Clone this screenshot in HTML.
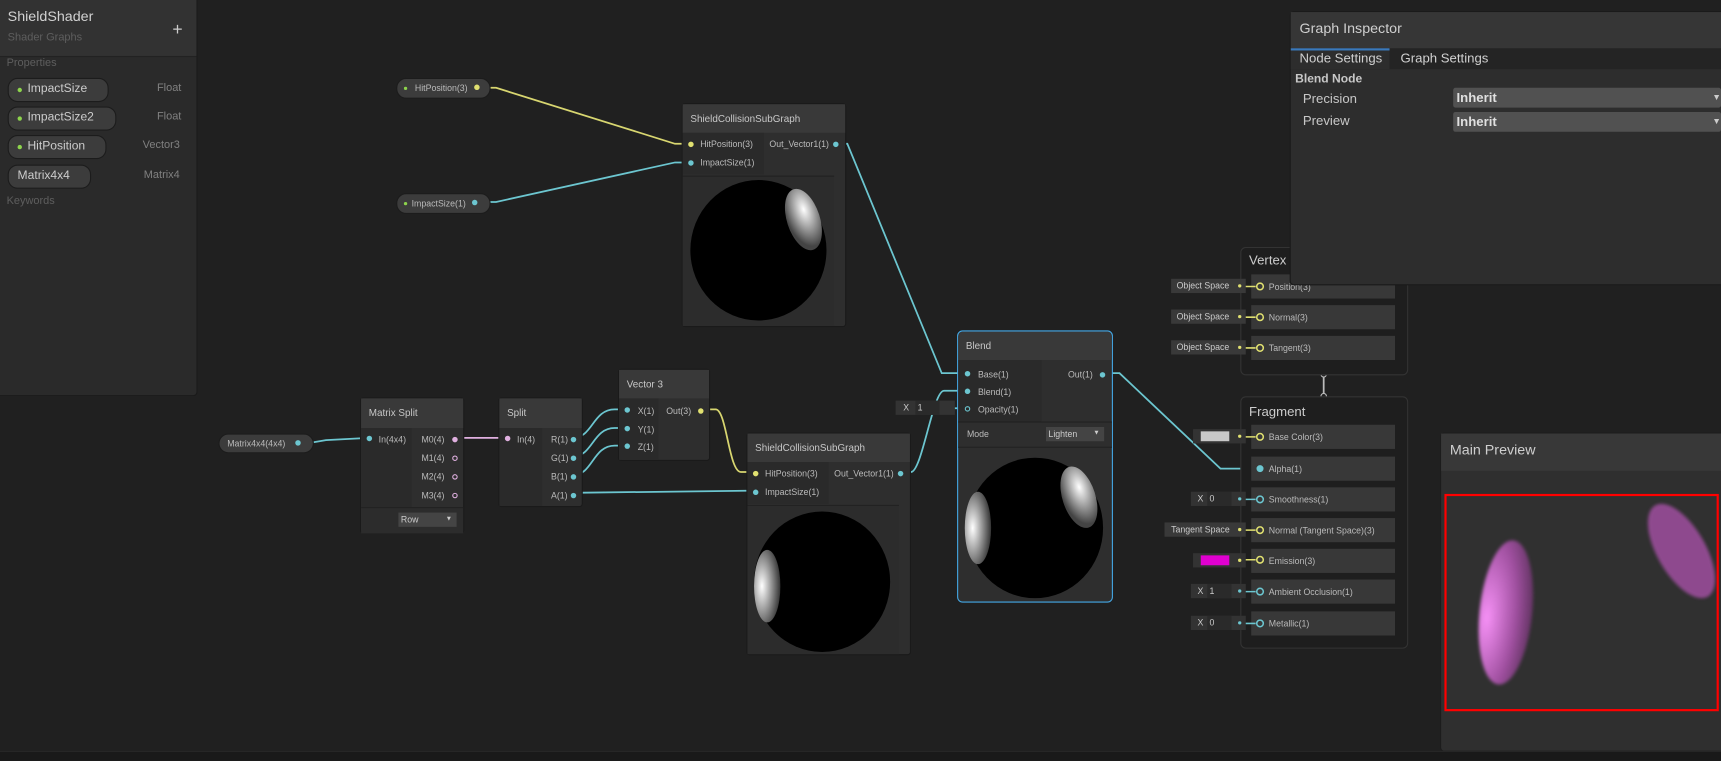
<!DOCTYPE html>
<html><head><meta charset="utf-8"><style>
html,body{margin:0;padding:0;width:1721px;height:760px;overflow:hidden;background:#202020;}
#w{position:absolute;left:0;top:0;width:1568px;height:692px;transform:scale(1.09758);transform-origin:0 0;font-family:"Liberation Sans",sans-serif;color:#c4c4c4;}
.a{position:absolute;}
.node{position:absolute;background:#2e2e2e;border:1px solid #1a1a1a;border-radius:3px;}
.tt{position:absolute;left:0;right:0;top:0;background:#393939;font-size:9px;color:#c8c8c8;padding-left:7px;box-sizing:border-box;}
.in{position:absolute;background:#2a2a2a;}
.p{position:absolute;font-size:8px;color:#bbb;white-space:nowrap;}
.pill{position:absolute;background:#3c3c3c;border:1px solid #1c1c1c;border-radius:9px;font-size:8px;color:#bbb;}
.row{position:absolute;background:#383838;left:10px;width:131px;height:22px;font-size:8px;color:#bbb;}
.row span{position:absolute;left:16px;top:7px;}
.fld{position:absolute;background:#393939;font-size:8px;color:#ccc;height:13px;line-height:13px;}
.dot{position:absolute;width:5px;height:5px;border-radius:50%;}
</style></head><body><div id="w">

<div class="a" style="left:0;top:0;width:179px;height:360px;background:#2a2a2a;border-right:1px solid #1a1a1a;border-bottom:1px solid #1a1a1a;border-radius:0 0 4px 0;"></div>
<div class="a" style="left:0;top:0;width:179px;height:51px;background:#323232;border-bottom:1px solid #222;"></div>
<div class="a" style="left:7px;top:7px;font-size:13px;color:#d2d2d2;">ShieldShader</div>
<div class="a" style="left:7px;top:29px;font-size:10px;color:#5e5e5e;">Shader Graphs</div>
<div class="a" style="left:157px;top:19px;font-size:16px;color:#ccc;">+</div>
<div class="a" style="left:6px;top:52px;font-size:10px;color:#5e5e5e;">Properties</div>
<div class="pill" style="left:7px;top:71px;width:90px;height:20px;font-size:11px;"><div class="dot" style="left:8px;top:8px;width:4px;height:4px;background:#8dd44c"></div><span class="a" style="left:17px;top:3px;color:#ccc">ImpactSize</span></div>
<div class="a" style="left:143px;top:75px;font-size:10px;color:#808080;">Float</div>
<div class="pill" style="left:7px;top:97px;width:97px;height:20px;font-size:11px;"><div class="dot" style="left:8px;top:8px;width:4px;height:4px;background:#8dd44c"></div><span class="a" style="left:17px;top:3px;color:#ccc">ImpactSize2</span></div>
<div class="a" style="left:143px;top:101px;font-size:10px;color:#808080;">Float</div>
<div class="pill" style="left:7px;top:123px;width:88px;height:20px;font-size:11px;"><div class="dot" style="left:8px;top:8px;width:4px;height:4px;background:#8dd44c"></div><span class="a" style="left:17px;top:3px;color:#ccc">HitPosition</span></div>
<div class="a" style="left:130px;top:127px;font-size:10px;color:#808080;">Vector3</div>
<div class="pill" style="left:7px;top:150px;width:74px;height:20px;font-size:11px;"><span class="a" style="left:8px;top:3px;color:#ccc">Matrix4x4</span></div>
<div class="a" style="left:131px;top:154px;font-size:10px;color:#808080;">Matrix4</div>
<div class="a" style="left:6px;top:178px;font-size:10px;color:#5e5e5e;">Keywords</div>

<svg class="a" style="left:0;top:0" width="1568" height="692" fill="none" stroke-width="1.6">
<path d="M446 80 L452 80 L615 131 L629 131" stroke="#d8d670"/>
<path d="M446 184 L452 184 L615 148 L629 148" stroke="#6cc6d0"/>
<path d="M762 131 L772 131 L858 340 L881 340" stroke="#6cc6d0"/>
<path d="M285 403 L297 401 L336 399" stroke="#6cc6d0"/>
<path d="M414 399 L461 399" stroke="#e0b0e0"/>
<path d="M522 399 C540 399 540 373 560 373 L571 373" stroke="#6cc6d0"/>
<path d="M522 416 C540 416 540 390 560 390 L571 390" stroke="#6cc6d0"/>
<path d="M522 433 C540 433 540 406 560 406 L571 406" stroke="#6cc6d0"/>
<path d="M522 449 L688 447" stroke="#6cc6d0"/>
<path d="M638 373 L652 373 C662 373 664 430 675 430 L688 430" stroke="#d8d670"/>
<path d="M820 430 L830 430 C840 430 850 356 860 356 L881 356" stroke="#6cc6d0"/>
<path d="M866 372 L881 372" stroke="#6cc6d0"/>
<path d="M1004 340 L1020 340 L1112 427 L1147 427" stroke="#6cc6d0"/>
<path d="M1206 340 L1206 361" stroke="#bbb"/>
<circle cx="1206" cy="341" r="2.5" stroke="#bbb" fill="#202020" stroke-width="1"/>
<circle cx="1206" cy="361" r="2.5" stroke="#bbb" fill="#202020" stroke-width="1"/>
</svg>

<div class="pill" style="left:361px;top:71px;width:84px;height:17px;"><div class="dot" style="left:6px;top:7px;width:3px;height:3px;background:#8dd44c"></div><span class="a" style="left:16px;top:4px">HitPosition(3)</span><div class="dot" style="left:70px;top:5px;background:#e0e070"></div></div>
<div class="pill" style="left:361px;top:176px;width:84px;height:17px;"><div class="dot" style="left:6px;top:7px;width:3px;height:3px;background:#8dd44c"></div><span class="a" style="left:13px;top:4px">ImpactSize(1)</span><div class="dot" style="left:68px;top:5px;background:#6cc6d0"></div></div>
<div class="pill" style="left:199px;top:395px;width:85px;height:16px;"><span class="a" style="left:7px;top:4px">Matrix4x4(4x4)</span><div class="dot" style="left:69px;top:5px;background:#6cc6d0"></div></div>

<div class="node" style="left:621px;top:94px;width:148px;height:202px;">
<div class="tt" style="height:26px;line-height:26px;">ShieldCollisionSubGraph</div>
<div class="in" style="left:0;top:26px;width:74px;height:38px;"></div>
<div class="dot" style="left:5px;top:34px;background:#e0e070"></div><div class="p" style="left:16px;top:32px">HitPosition(3)</div>
<div class="dot" style="left:5px;top:51px;background:#6cc6d0"></div><div class="p" style="left:16px;top:49px">ImpactSize(1)</div>
<div class="p" style="left:79px;top:32px">Out_Vector1(1)</div><div class="dot" style="left:137px;top:34px;background:#6cc6d0"></div>
<div class="a" style="left:0;top:65px;width:138px;height:136px;background:#2c2c2c;border-top:1px solid #222"></div>
<svg class="a" style="left:0;top:65px" width="138" height="136"><defs><radialGradient id="g1" cx="0.6" cy="0.35" r="0.6"><stop offset="0" stop-color="#fff"/><stop offset="1" stop-color="#444"/></radialGradient></defs><ellipse cx="69" cy="68" rx="62" ry="64" fill="#000"/><ellipse cx="110" cy="40" rx="15" ry="29" transform="rotate(-18 110 40)" fill="url(#g1)"/></svg>
</div>

<div class="node" style="left:328px;top:362px;width:93px;height:122px;">
<div class="tt" style="height:27px;line-height:27px;">Matrix Split</div>
<div class="in" style="left:0;top:27px;width:46px;height:72px;"></div>
<div class="dot" style="left:5px;top:34px;background:#6cc6d0"></div><div class="p" style="left:16px;top:33px">In(4x4)</div>
<div class="p" style="left:55px;top:33px">M0(4)</div><div class="dot" style="left:83px;top:35px;background:#e0b0e0"></div>
<div class="p" style="left:55px;top:50px">M1(4)</div><div class="dot" style="left:83px;top:52px;border:1px solid #e0b0e0;width:3px;height:3px"></div>
<div class="p" style="left:55px;top:67px">M2(4)</div><div class="dot" style="left:83px;top:69px;border:1px solid #e0b0e0;width:3px;height:3px"></div>
<div class="p" style="left:55px;top:84px">M3(4)</div><div class="dot" style="left:83px;top:86px;border:1px solid #e0b0e0;width:3px;height:3px"></div>
<div class="a" style="left:0;top:99px;width:93px;height:23px;background:#2c2c2c;border-top:1px solid #222"></div>
<div class="fld" style="left:34px;top:104px;width:53px;background:#444;">&nbsp;Row<span style="position:absolute;right:4px;font-size:6px">▼</span></div>
</div>

<div class="node" style="left:454px;top:362px;width:75px;height:98px;">
<div class="tt" style="height:27px;line-height:27px;">Split</div>
<div class="in" style="left:0;top:27px;width:39px;height:71px;"></div>
<div class="dot" style="left:5px;top:34px;background:#e0b0e0"></div><div class="p" style="left:16px;top:33px">In(4)</div>
<div class="p" style="left:47px;top:33px">R(1)</div><div class="dot" style="left:65px;top:35px;background:#6cc6d0"></div>
<div class="p" style="left:47px;top:50px">G(1)</div><div class="dot" style="left:65px;top:52px;background:#6cc6d0"></div>
<div class="p" style="left:47px;top:67px">B(1)</div><div class="dot" style="left:65px;top:69px;background:#6cc6d0"></div>
<div class="p" style="left:47px;top:84px">A(1)</div><div class="dot" style="left:65px;top:86px;background:#6cc6d0"></div>
</div>

<div class="node" style="left:563px;top:336px;width:82px;height:82px;">
<div class="tt" style="height:26px;line-height:26px;">Vector 3</div>
<div class="in" style="left:0;top:26px;width:36px;height:56px;"></div>
<div class="dot" style="left:5px;top:34px;background:#6cc6d0"></div><div class="p" style="left:17px;top:33px">X(1)</div>
<div class="dot" style="left:5px;top:51px;background:#6cc6d0"></div><div class="p" style="left:17px;top:50px">Y(1)</div>
<div class="dot" style="left:5px;top:67px;background:#6cc6d0"></div><div class="p" style="left:17px;top:66px">Z(1)</div>
<div class="p" style="left:43px;top:33px">Out(3)</div><div class="dot" style="left:72px;top:35px;background:#e0e070"></div>
</div>

<div class="node" style="left:680px;top:394px;width:148px;height:201px;">
<div class="tt" style="height:26px;line-height:26px;">ShieldCollisionSubGraph</div>
<div class="in" style="left:0;top:26px;width:74px;height:38px;"></div>
<div class="dot" style="left:5px;top:34px;background:#e0e070"></div><div class="p" style="left:16px;top:32px">HitPosition(3)</div>
<div class="dot" style="left:5px;top:51px;background:#6cc6d0"></div><div class="p" style="left:16px;top:49px">ImpactSize(1)</div>
<div class="p" style="left:79px;top:32px">Out_Vector1(1)</div><div class="dot" style="left:137px;top:34px;background:#6cc6d0"></div>
<div class="a" style="left:0;top:65px;width:138px;height:135px;background:#2c2c2c;border-top:1px solid #222"></div>
<svg class="a" style="left:0;top:65px" width="138" height="135"><defs><radialGradient id="g2" cx="0.3" cy="0.5" r="0.7"><stop offset="0" stop-color="#fff"/><stop offset="1" stop-color="#333"/></radialGradient></defs><ellipse cx="68" cy="70" rx="62" ry="64" fill="#000"/><ellipse cx="18" cy="74" rx="12" ry="33" fill="url(#g2)"/></svg>
</div>

<div class="fld" style="left:816px;top:365px;width:54px;background:#333;"><span style="position:absolute;left:7px">X</span><span style="position:absolute;left:18px;width:20px;background:#2a2a2a;padding-left:2px">1</span></div>

<div class="node" style="left:872px;top:301px;width:140px;height:246px;border:1px solid #44a8e6;border-radius:5px;">
<div class="tt" style="height:26px;line-height:26px;border-radius:5px 5px 0 0">Blend</div>
<div class="in" style="left:0;top:26px;width:76px;height:56px;"></div>
<div class="dot" style="left:6px;top:36px;background:#6cc6d0"></div><div class="p" style="left:18px;top:35px">Base(1)</div>
<div class="dot" style="left:6px;top:52px;background:#6cc6d0"></div><div class="p" style="left:18px;top:51px">Blend(1)</div>
<div class="dot" style="left:6px;top:68px;border:1px solid #6cc6d0;width:3px;height:3px"></div><div class="p" style="left:18px;top:67px">Opacity(1)</div>
<div class="p" style="left:100px;top:35px">Out(1)</div><div class="dot" style="left:129px;top:37px;background:#6cc6d0"></div>
<div class="a" style="left:0;top:82px;width:140px;height:22px;background:#2e2e2e;border-top:1px solid #222;border-bottom:1px solid #222"></div>
<div class="p" style="left:8px;top:89px">Mode</div>
<div class="fld" style="left:80px;top:87px;width:53px;background:#444;">&nbsp;Lighten<span style="position:absolute;right:4px;font-size:6px">▼</span></div>
<svg class="a" style="left:0;top:105px" width="140" height="140"><defs><radialGradient id="g3" cx="0.6" cy="0.35" r="0.6"><stop offset="0" stop-color="#fff"/><stop offset="1" stop-color="#444"/></radialGradient><radialGradient id="g4" cx="0.3" cy="0.5" r="0.7"><stop offset="0" stop-color="#fff"/><stop offset="1" stop-color="#333"/></radialGradient></defs><ellipse cx="70" cy="74" rx="62" ry="64" fill="#000"/><ellipse cx="110" cy="46" rx="15" ry="29" transform="rotate(-18 110 46)" fill="url(#g3)"/><ellipse cx="18" cy="74" rx="12" ry="33" fill="url(#g4)"/></svg>
</div>

<div class="a" style="left:1130px;top:225px;width:151px;height:115px;border:1px solid #333;border-radius:5px;background:#1e1e1e;"></div>
<div class="a" style="left:1138px;top:230px;font-size:12px;color:#ccc;">Vertex</div>
<div class="row" style="left:1140px;top:250px;"><span>Position(3)</span></div>
<div class="row" style="left:1140px;top:278px;"><span>Normal(3)</span></div>
<div class="row" style="left:1140px;top:306px;"><span>Tangent(3)</span></div>

<div class="a" style="left:1130px;top:361px;width:151px;height:228px;border:1px solid #333;border-radius:5px;background:#1e1e1e;"></div>
<div class="a" style="left:1138px;top:368px;font-size:12px;color:#ccc;">Fragment</div>
<div class="row" style="left:1140px;top:387px;"><span>Base Color(3)</span></div>
<div class="row" style="left:1140px;top:416px;"><span>Alpha(1)</span></div>
<div class="row" style="left:1140px;top:444px;"><span>Smoothness(1)</span></div>
<div class="row" style="left:1140px;top:472px;"><span>Normal (Tangent Space)(3)</span></div>
<div class="row" style="left:1140px;top:500px;"><span>Emission(3)</span></div>
<div class="row" style="left:1140px;top:528px;"><span>Ambient Occlusion(1)</span></div>
<div class="row" style="left:1140px;top:557px;"><span>Metallic(1)</span></div>

<svg class="a" style="left:1060px;top:240px" width="100" height="350" fill="none" stroke-width="1.4">
<g stroke="#e0e070"><path d="M72 21 H84"/><circle cx="88" cy="21" r="3"/><path d="M72 49 H84"/><circle cx="88" cy="49" r="3"/><path d="M72 77 H84"/><circle cx="88" cy="77" r="3"/><path d="M72 158 H84"/><circle cx="88" cy="158" r="3"/><path d="M72 243 H84"/><circle cx="88" cy="243" r="3"/><path d="M72 270 H84"/><circle cx="88" cy="270" r="3"/></g>
<g stroke="#6cc6d0"><circle cx="88" cy="187" r="2.5" fill="#6cc6d0"/><path d="M72 215 H84"/><circle cx="88" cy="215" r="3"/><path d="M72 299 H84"/><circle cx="88" cy="299" r="3"/><path d="M72 328 H84"/><circle cx="88" cy="328" r="3"/></g>
</svg>
<div class="fld" style="left:1067px;top:254px;width:68px;"><span style="position:absolute;left:5px">Object Space</span><div class="dot" style="left:61px;top:5px;width:3px;height:3px;background:#e0e070"></div></div>
<div class="fld" style="left:1067px;top:282px;width:68px;"><span style="position:absolute;left:5px">Object Space</span><div class="dot" style="left:61px;top:5px;width:3px;height:3px;background:#e0e070"></div></div>
<div class="fld" style="left:1067px;top:310px;width:68px;"><span style="position:absolute;left:5px">Object Space</span><div class="dot" style="left:61px;top:5px;width:3px;height:3px;background:#e0e070"></div></div>
<div class="fld" style="left:1087px;top:391px;width:48px;background:#333"><span style="position:absolute;left:7px;top:2px;width:26px;height:9px;background:#c8c8c8"></span><div class="dot" style="left:41px;top:5px;width:3px;height:3px;background:#e0e070"></div></div>
<div class="fld" style="left:1085px;top:448px;width:50px;background:#333"><span style="position:absolute;left:6px">X</span><span style="position:absolute;left:15px;width:20px;background:#2a2a2a;padding-left:2px">0</span><div class="dot" style="left:43px;top:5px;width:3px;height:3px;background:#6cc6d0"></div></div>
<div class="fld" style="left:1061px;top:476px;width:74px;"><span style="position:absolute;left:6px">Tangent Space</span><div class="dot" style="left:67px;top:5px;width:3px;height:3px;background:#e0e070"></div></div>
<div class="fld" style="left:1087px;top:504px;width:48px;background:#333"><span style="position:absolute;left:7px;top:2px;width:26px;height:9px;background:#e000d0"></span><div class="dot" style="left:41px;top:5px;width:3px;height:3px;background:#e0e070"></div></div>
<div class="fld" style="left:1085px;top:532px;width:50px;background:#333"><span style="position:absolute;left:6px">X</span><span style="position:absolute;left:15px;width:20px;background:#2a2a2a;padding-left:2px">1</span><div class="dot" style="left:43px;top:5px;width:3px;height:3px;background:#6cc6d0"></div></div>
<div class="fld" style="left:1085px;top:561px;width:50px;background:#333"><span style="position:absolute;left:6px">X</span><span style="position:absolute;left:15px;width:20px;background:#2a2a2a;padding-left:2px">0</span><div class="dot" style="left:43px;top:5px;width:3px;height:3px;background:#6cc6d0"></div></div>

<div class="a" style="left:1175px;top:10px;width:393px;height:248px;background:#2d2d2d;border:1px solid #1a1a1a;border-radius:4px 0 0 4px;"></div>
<div class="a" style="left:1176px;top:11px;width:392px;height:33px;background:#363636;"></div>
<div class="a" style="left:1184px;top:18px;font-size:13px;color:#cfcfcf;">Graph Inspector</div>
<div class="a" style="left:1176px;top:44px;width:392px;height:19px;background:#242424;"></div>
<div class="a" style="left:1176px;top:44px;width:90px;height:19px;background:#2d2d2d;border-top:2px solid #3a79bb;box-sizing:border-box;"></div>
<div class="a" style="left:1184px;top:46px;font-size:12px;color:#d0d0d0;">Node Settings</div>
<div class="a" style="left:1276px;top:46px;font-size:12px;color:#d0d0d0;">Graph Settings</div>
<div class="a" style="left:1180px;top:66px;font-size:11px;font-weight:bold;color:#c8c8c8;">Blend Node</div>
<div class="a" style="left:1187px;top:83px;font-size:12px;color:#c8c8c8;">Precision</div>
<div class="a" style="left:1187px;top:103px;font-size:12px;color:#c8c8c8;">Preview</div>
<div class="a" style="left:1324px;top:80px;width:244px;height:18px;background:#515151;border-radius:2px;"><span class="a" style="left:3px;top:2px;font-size:12px;font-weight:bold;color:#e0e0e0">Inherit</span><span class="a" style="right:0;top:4px;font-size:8px;color:#ccc">▼</span></div>
<div class="a" style="left:1324px;top:102px;width:244px;height:18px;background:#515151;border-radius:2px;"><span class="a" style="left:3px;top:2px;font-size:12px;font-weight:bold;color:#e0e0e0">Inherit</span><span class="a" style="right:0;top:4px;font-size:8px;color:#ccc">▼</span></div>

<div class="a" style="left:1312px;top:394px;width:256px;height:289px;background:#2f2f2f;border:1px solid #1c1c1c;border-radius:4px 0 0 4px;"></div>
<div class="a" style="left:1313px;top:395px;width:255px;height:34px;background:#383838;"></div>
<div class="a" style="left:1321px;top:402px;font-size:13px;color:#cfcfcf;">Main Preview</div>
<div class="a" style="left:1316px;top:450px;width:246px;height:194px;border:2px solid #ff0000;background:#303030;overflow:hidden;">
<svg width="246" height="194"><defs><radialGradient id="pk" cx="0.15" cy="0.55" r="0.9"><stop offset="0" stop-color="#f590f5"/><stop offset="0.6" stop-color="#a050a0"/><stop offset="1" stop-color="#5a305a"/></radialGradient><filter id="bl"><feGaussianBlur stdDeviation="1.5"/></filter></defs>
<ellipse cx="54" cy="106" rx="24" ry="66" transform="rotate(6 54 106)" fill="url(#pk)" filter="url(#bl)"/>
<ellipse cx="214" cy="50" rx="22" ry="48" transform="rotate(-30 214 50)" fill="#9a4e9a" filter="url(#bl)" opacity="0.9"/>
</svg></div>

<div class="a" style="left:0;top:684px;width:1568px;height:8px;background:#191919;border-top:1px solid #2a2a2a"></div>
</div></body></html>
